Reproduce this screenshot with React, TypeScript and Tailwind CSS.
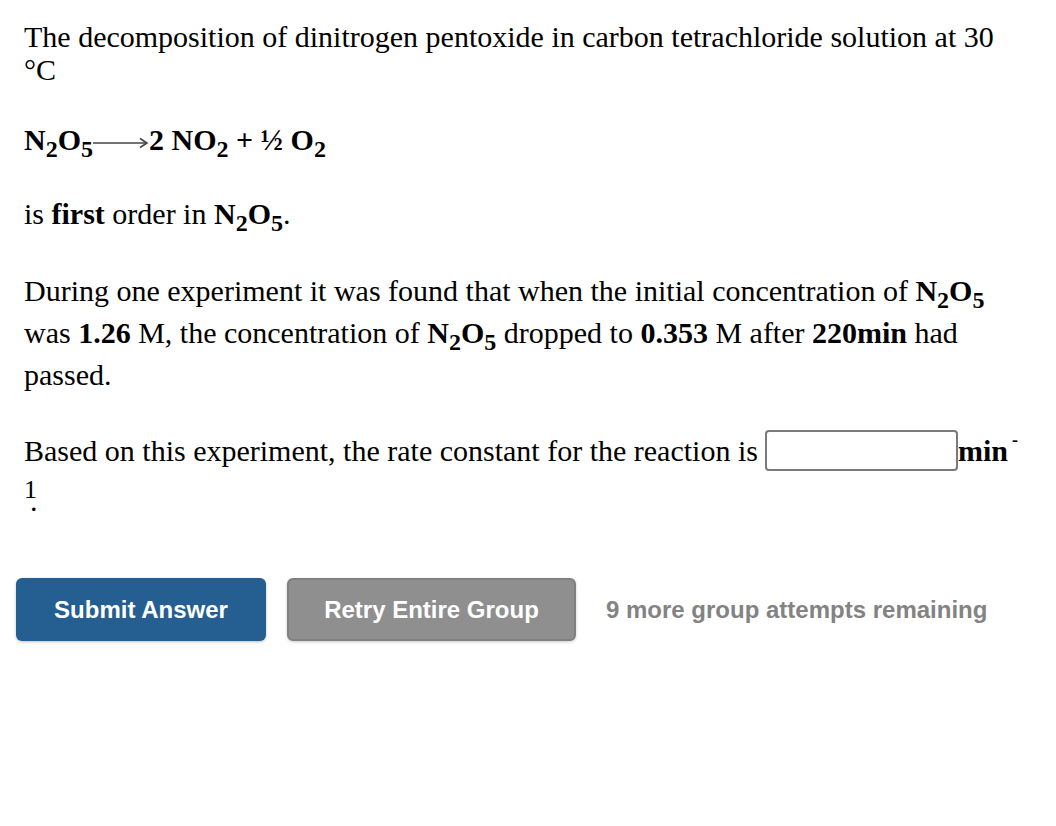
import React from "react";

const serif = { fontFamily: '"Liberation Serif", "Times New Roman", serif' };

function Sub({ children }: { children: React.ReactNode }) {
  return <sub className="relative bottom-[-0.3em] text-[80%] leading-none align-baseline">{children}</sub>;
}

function N2O5() {
  return (
    <b>
      N<Sub>2</Sub>O<Sub>5</Sub>
    </b>
  );
}

function Arrow() {
  return (
    <svg width="56" height="14" viewBox="0 0 56 14" className="inline-block align-middle">
      <line x1="0" y1="7" x2="53" y2="7" stroke="#444" strokeWidth="1.6" />
      <path d="M47 2.5 L54 7 L47 11.5" fill="none" stroke="#444" strokeWidth="1.6" />
    </svg>
  );
}

export default function App() {
  return (
    <div className="min-h-[826px] w-[1056px] bg-white text-black">
      <div className="px-6 pt-[20px] text-[30px]" style={serif}>
        <p className="leading-[33px]">
          The decomposition of dinitrogen pentoxide in carbon tetrachloride solution at 30
          <br />
          °C
        </p>

        <p className="mt-[37px] leading-[33px]">
          <N2O5 />
          <Arrow />
          <b>
            2 NO<Sub>2</Sub> + ½ O<Sub>2</Sub>
          </b>
        </p>

        <p className="mt-[41px] leading-[33px]">
          is <b>first</b> order in <N2O5 />.
        </p>

        <p className="mt-[40px] leading-[42px]">
          During one experiment it was found that when the initial concentration of <N2O5 />
          <br />
          was <b>1.26</b> M, the concentration of <N2O5 /> dropped to <b>0.353</b> M after <b>220min</b> had
          <br />
          passed.
        </p>

        <div className="mt-[34px] leading-[33px]">
          <div className="flex items-center">
            <span>Based on this experiment, the rate constant for the reaction is</span>
            <input
              type="text"
              className="ml-[7px] h-[41px] w-[193px] rounded-[4px] border-2 border-[#7a7a7a] bg-white outline-none"
            />
            <b>min</b>
            <span className="relative top-[-10px] ml-[4px] text-[18px] font-bold">-</span>
          </div>
          <div className="relative h-[36px]">
            <span className="absolute left-0 top-[6px] text-[26px] leading-none">1</span>
            <span className="absolute left-[6px] top-[13px]">.</span>
          </div>
        </div>
      </div>

      <div
        className="mt-[71px] flex items-center pl-4"
        style={{ fontFamily: '"Liberation Sans", Arial, Helvetica, sans-serif' }}
      >
        <button className="h-[63px] w-[250px] rounded-[6px] bg-[#255f91] text-[24px] font-bold text-white shadow-[0_1px_3px_rgba(0,0,0,0.25)]">
          Submit Answer
        </button>
        <button className="ml-[21px] h-[63px] w-[289px] rounded-[6px] border-2 border-[#808080] bg-[#8f8f8f] text-[24px] font-bold text-white shadow-[0_1px_3px_rgba(0,0,0,0.2)]">
          Retry Entire Group
        </button>
        <span className="ml-[30px] text-[24px] font-bold text-[#838383]">9 more group attempts remaining</span>
      </div>
    </div>
  );
}
